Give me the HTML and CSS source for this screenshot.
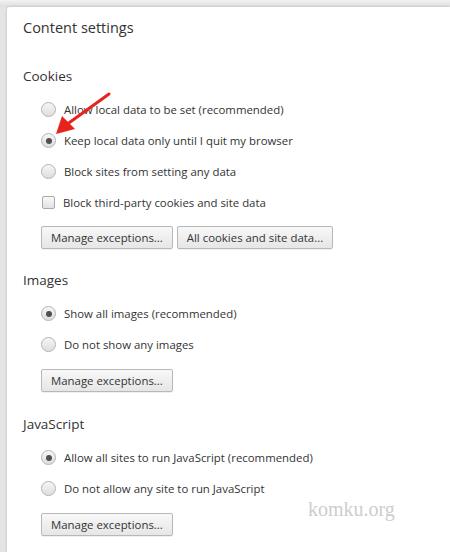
FILE: index.html
```html
<!DOCTYPE html>
<html>
<head>
<meta charset="utf-8">
<link rel="stylesheet" href="styles.css">
</head>
<body>
<div class="dialog">
  <h1 class="title">Content settings</h1>

  <section class="section">
    <h2 class="heading">Cookies</h2>
    <div class="option"><span class="radio"></span><span>Allow local data to be set (recommended)</span></div>
    <div class="option"><span class="radio checked"></span><span>Keep local data only until I quit my browser</span></div>
    <div class="option"><span class="radio"></span><span>Block sites from setting any data</span></div>
    <div class="option check-option"><span class="checkbox"></span><span>Block third-party cookies and site data</span></div>
    <div class="buttons first">
      <button class="btn">Manage exceptions...</button>
      <button class="btn">All cookies and site data...</button>
    </div>
  </section>

  <section class="section">
    <h2 class="heading">Images</h2>
    <div class="option"><span class="radio checked"></span><span>Show all images (recommended)</span></div>
    <div class="option"><span class="radio"></span><span>Do not show any images</span></div>
    <div class="buttons">
      <button class="btn">Manage exceptions...</button>
    </div>
  </section>

  <section class="section">
    <h2 class="heading">JavaScript</h2>
    <div class="option"><span class="radio checked"></span><span>Allow all sites to run JavaScript (recommended)</span></div>
    <div class="option"><span class="radio"></span><span>Do not allow any site to run JavaScript</span></div>
    <div class="buttons">
      <button class="btn">Manage exceptions...</button>
    </div>
  </section>
</div>

<svg class="arrow" width="70" height="50" viewBox="0 0 70 50">
  <line x1="59" y1="2" x2="16" y2="33" stroke="#e8221c" stroke-width="3" stroke-linecap="round"/>
  <polygon points="6,42 12,24 25,37" fill="#e8221c"/>
</svg>

<div class="watermark">komku.org</div>
</body>
</html>
```

FILE: styles.css
```css
html, body {
  margin: 0;
  padding: 0;
}
body {
  width: 450px;
  height: 552px;
  overflow: hidden;
  background: linear-gradient(#f2f2f2, #dedede 7px, #e4e4e4 7px);
  font-family: "Segoe UI", "Open Sans", "Noto Sans", sans-serif;
  color: #222;
  position: relative;
}
.dialog {
  margin: 7px 0 0 7px;
  height: 545px;
  background: #fff;
  border-top-left-radius: 3px;
  box-shadow: 0 0 3px rgba(0,0,0,0.18);
  padding: 11px 0 0 16px;
  box-sizing: border-box;
}
.title {
  margin: 0;
  font-weight: normal;
  font-size: 14.5px;
  line-height: 20px;
  color: #333;
}
.section {
  margin-top: 28px;
}
.section + .section {
  margin-top: 21px;
}
.section + .section + .section {
  margin-top: 22px;
}
.heading {
  margin: 0 0 8px 0;
  font-weight: normal;
  font-size: 13.5px;
  line-height: 20px;
  color: #333;
}
.option {
  height: 31px;
  display: flex;
  align-items: center;
  padding-left: 18px;
  font-size: 11.4px;
  color: #333;
}
.radio {
  width: 13px;
  height: 13px;
  border-radius: 50%;
  border: 1px solid #b4b4b4;
  background: linear-gradient(#f6f6f6, #dedede);
  box-sizing: content-box;
  margin-right: 8px;
  display: flex;
  align-items: center;
  justify-content: center;
  flex: none;
}
.radio.checked::after {
  content: "";
  width: 6px;
  height: 6px;
  border-radius: 50%;
  background: #505050;
}
.checkbox {
  width: 11px;
  height: 11px;
  border: 1px solid #aaa;
  border-radius: 2px;
  background: linear-gradient(#f8f8f8, #e2e2e2);
  margin-right: 8px;
  margin-left: 1px;
  flex: none;
}
.buttons {
  display: flex;
  gap: 4px;
  padding-left: 18px;
  margin-top: 9px;
}
.buttons.first {
  margin-top: 8px;
}
.btn {
  height: 23px;
  padding: 0 9px;
  font-family: inherit;
  font-size: 11.4px;
  color: #333;
  border: 1px solid #b8b8b8;
  border-radius: 2px;
  background: linear-gradient(#f8f8f8, #e6e6e6);
  box-shadow: 0 1px 0 rgba(0,0,0,0.06);
}
.arrow {
  position: absolute;
  left: 50px;
  top: 92px;
}
.watermark {
  position: absolute;
  left: 308px;
  top: 498px;
  font-family: "Liberation Serif", "DejaVu Serif", serif;
  font-size: 20px;
  color: #cdcdcd;
}
```
